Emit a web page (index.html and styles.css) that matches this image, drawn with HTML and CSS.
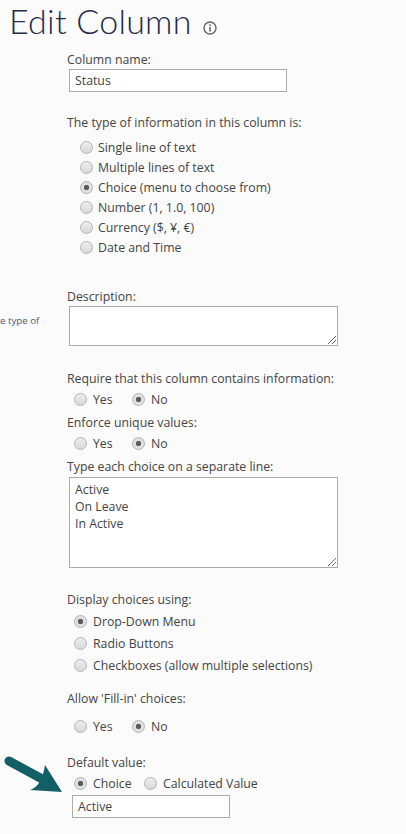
FILE: index.html
```html
<!DOCTYPE html>
<html lang="en">
<head>
<meta charset="UTF-8">
<title>Edit Column</title>
<link rel="stylesheet" href="styles.css">
</head>
<body>
<div class="page">
  <h1 class="title">Edit Column
    <svg class="info" width="14" height="14" viewBox="0 0 14 14"><circle cx="7" cy="7" r="6" fill="none" stroke="#666" stroke-width="1.4"/><rect x="6.2" y="6" width="1.6" height="4.6" fill="#666"/><rect x="6.2" y="3.4" width="1.6" height="1.6" fill="#666"/></svg>
  </h1>

  <div class="form">
    <div class="label l-name">Column name:</div>
    <div class="field wide">Status</div>

    <div class="label l-type">The type of information in this column is:</div>
    <ul class="options indent">
      <li><span class="radio"></span>Single line of text</li>
      <li><span class="radio"></span>Multiple lines of text</li>
      <li><span class="radio on"></span>Choice (menu to choose from)</li>
      <li><span class="radio"></span>Number (1, 1.0, 100)</li>
      <li><span class="radio"></span>Currency ($, ¥, €)</li>
      <li><span class="radio"></span>Date and Time</li>
    </ul>

    <div class="note-row">
      <div class="side-note">e type of</div>
      <div>
        <div class="label l-desc">Description:</div>
        <div class="area short"><span class="grip"></span></div>
      </div>
    </div>

    <div class="label l-req">Require that this column contains information:</div>
    <div class="inline i-req"><span class="pick p-yes"><span class="radio"></span>Yes</span><span class="pick"><span class="radio on"></span>No</span></div>

    <div class="label l-uniq">Enforce unique values:</div>
    <div class="inline i-uniq"><span class="pick p-yes"><span class="radio"></span>Yes</span><span class="pick"><span class="radio on"></span>No</span></div>

    <div class="label l-each">Type each choice on a separate line:</div>
    <div class="area tall">Active<br>On Leave<br>In Active<span class="grip"></span></div>

    <div class="label l-disp">Display choices using:</div>
    <ul class="options spaced">
      <li><span class="radio on"></span>Drop-Down Menu</li>
      <li><span class="radio"></span>Radio Buttons</li>
      <li><span class="radio"></span>Checkboxes (allow multiple selections)</li>
    </ul>

    <div class="label l-fill">Allow 'Fill-in' choices:</div>
    <div class="inline i-fill"><span class="pick p-yes"><span class="radio"></span>Yes</span><span class="pick"><span class="radio on"></span>No</span></div>

    <div class="label l-def">Default value:</div>
    <div class="inline i-def"><span class="pick p-choice"><span class="radio on"></span>Choice</span><span class="pick"><span class="radio"></span>Calculated Value</span></div>
    <div class="field small">Active</div>
  </div>

  <svg class="arrow" width="70" height="50" viewBox="0 0 70 50"><path d="M9 6 L44 25" fill="none" stroke="#135f66" stroke-width="9" stroke-linecap="round"/><path d="M45 10 L62 37 L30 35 Q42 31 45 10 Z" fill="#135f66"/></svg>
</div>
</body>
</html>
```

FILE: styles.css
```css
* {
  padding: 0;
  margin: 0;
  box-sizing: border-box;
}

html,
body {
  width: 100%;
  min-height: 100%;
  background: #fbfbfb;
  overflow: hidden;
}

body {
  font-family: "Open Sans", "Liberation Sans", sans-serif;
  font-size: 12.3px;
  color: #444;
}

.page {
  position: relative;
  height: 834px;
}

.title {
  font-family: Lato, "Open Sans", sans-serif;
  font-size: 34px;
  font-weight: 300;
  letter-spacing: 0.25px;
  height: 44px;
  line-height: 41px;
  color: #262a4a;
  padding-left: 9px;
  white-space: nowrap;
}

.info {
  margin-left: 2px;
  vertical-align: -1px;
}

.form {
  padding-left: 67px;
}

.label {
  line-height: 18px;
  white-space: nowrap;
}

.l-name { margin-top: 7px; }
.l-type { margin-top: 22px; }
.l-desc { margin-top: 0; }
.l-req { margin-top: 24px; }
.l-uniq { margin-top: 5px; }
.l-each { margin-top: 5px; }
.l-disp { margin-top: 23px; }
.l-fill { margin-top: 14px; }
.l-def { margin-top: 18px; }

.field {
  height: 23px;
  line-height: 21px;
  background: #fff;
  border: 1px solid #ababab;
  padding-left: 5px;
  margin-left: 2px;
}

.wide {
  width: 218px;
}

.small {
  width: 158px;
  margin-left: 5px;
  margin-top: 2px;
}

.area {
  position: relative;
  width: 269px;
  margin-left: 2px;
  background: #fff;
  border: 1px solid #ababab;
  padding: 3px 5px;
  line-height: 17px;
}

.short {
  height: 40px;
}

.tall {
  height: 91px;
  margin-top: 1px;
}

.grip {
  position: absolute;
  right: 1px;
  bottom: 1px;
  width: 8px;
  height: 8px;
  background: linear-gradient(135deg, transparent 46%, #666 46%, #666 54%, transparent 54%, transparent 70%, #666 70%, #666 78%, transparent 78%);
}

.options {
  list-style: none;
}

.options li {
  display: flex;
  align-items: center;
  height: 20px;
  white-space: nowrap;
}

.indent {
  margin-top: 5px;
  padding-left: 13px;
}

.indent .radio {
  margin-right: 5px;
}

.spaced {
  margin-top: 1px;
  padding-left: 7px;
}

.spaced li {
  height: 22px;
}

.radio {
  display: inline-block;
  flex: none;
  width: 13px;
  height: 13px;
  margin-right: 6px;
  border: 1px solid #b4b4b4;
  border-radius: 50%;
  background: linear-gradient(#eeeeee, #d8d8d8);
  vertical-align: -2px;
}

.on {
  background: radial-gradient(circle, #5c5c5c 0, #5c5c5c 2.4px, #e0e0e0 3px);
}

.inline {
  display: flex;
  align-items: center;
  height: 20px;
  padding-left: 7px;
  white-space: nowrap;
}

.pick {
  display: flex;
  align-items: center;
}

.p-yes {
  width: 58px;
}

.p-choice {
  width: 70px;
}

.i-req { margin-top: 1px; }
.i-uniq { margin-top: 1px; }
.i-fill { margin-top: 8px; }
.i-def { margin-top: 1px; }

.note-row {
  display: flex;
  margin-left: -67px;
  margin-top: 31px;
}

.side-note {
  width: 67px;
  padding-top: 24px;
  font-size: 9.7px;
  line-height: 18px;
  color: #4a5a78;
}

.arrow {
  position: absolute;
  left: 0;
  top: 755px;
}
```
